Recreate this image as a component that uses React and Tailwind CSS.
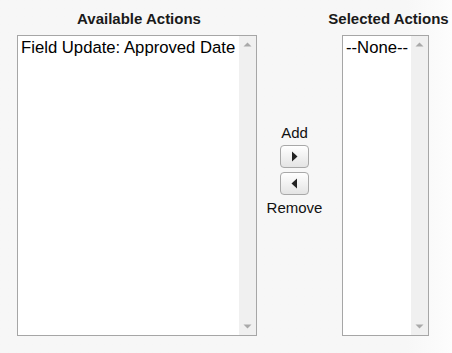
import React from "react";

function Scrollbar() {
  return (
    <div className="w-[17px] h-full bg-[#f0f0f0] flex flex-col items-center justify-between py-[6px]">
      <svg width="9" height="5" viewBox="0 0 9 5"><path d="M0.5 4.5 L4.5 0.5 L8.5 4.5 Z" fill="#a9a9a9" /></svg>
      <svg width="9" height="5" viewBox="0 0 9 5"><path d="M0.5 0.5 L4.5 4.5 L8.5 0.5 Z" fill="#a9a9a9" /></svg>
    </div>
  );
}

function ListBox({ width, item }) {
  return (
    <div className={`${width} h-[301px] border border-[#a6a6a6] bg-white flex`}>
      <div className="flex-1 min-w-0 pl-[3px] pt-[2px] text-[16.7px] leading-[20px] text-black whitespace-nowrap overflow-hidden">
        {item}
      </div>
      <Scrollbar />
    </div>
  );
}

function ArrowButton({ dir }) {
  return (
    <div className="w-[29px] h-[23px] rounded-[4px] border border-[#a8a8a8] bg-gradient-to-b from-white to-[#e4e4e4] flex items-center justify-center">
      <svg width="7" height="11" viewBox="0 0 7 11">
        {dir === "right" ? (
          <path d="M1 0.5 L6.5 5.5 L1 10.5 Z" fill="#222" />
        ) : (
          <path d="M6 0.5 L0.5 5.5 L6 10.5 Z" fill="#222" />
        )}
      </svg>
    </div>
  );
}

export default function App() {
  return (
    <div
      className="w-[452px] h-[353px] bg-gradient-to-r from-[#f7f7f7] via-[#f7f7f7] via-90% to-[#fdfdfd] overflow-hidden pl-[17px] pt-[10px] flex"
      style={{ fontFamily: '"Liberation Sans", Arial, sans-serif' }}
    >
      <div className="flex flex-col w-[240px]">
        <div className="text-center pl-[4px] font-bold text-[15px] leading-[18px] text-[#1a1a1a] h-[25px]">
          Available Actions
        </div>
        <ListBox width="w-[240px]" item="Field Update: Approved Date" />
      </div>
      <div className="w-[85px] flex flex-col items-center pt-[114px] pr-[10px] text-[15px] leading-[18px] text-[#111]">
        <div className="mb-[3px]">Add</div>
        <ArrowButton dir="right" />
        <div className="h-[4px]" />
        <ArrowButton dir="left" />
        <div className="mt-[4px]">Remove</div>
      </div>
      <div className="flex flex-col w-[87px]">
        <div className="flex justify-center pl-[6px] h-[25px]">
          <div className="whitespace-nowrap font-bold text-[15px] leading-[18px] text-[#1a1a1a]">
            Selected Actions
          </div>
        </div>
        <ListBox width="w-[87px]" item="--None--" />
      </div>
    </div>
  );
}
